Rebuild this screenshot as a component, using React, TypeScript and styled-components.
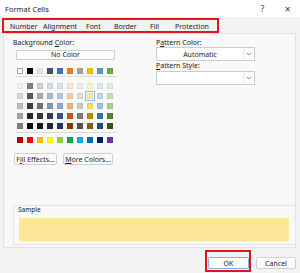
import React from "react";
import styled, { createGlobalStyle } from "styled-components";

const Global = createGlobalStyle`
  html, body { margin: 0; padding: 0; }
  body {
    width: 300px; height: 273px; overflow: hidden; background: #f3f3f3;
    font-family: "Noto Sans", "Open Sans", sans-serif;
  }
`;

const Dialog = styled.div`
  width: 300px; height: 273px; display: flex; flex-direction: column;
  background: #f3f3f3; color: #1b1b1b; font-size: 7px; box-sizing: border-box;
`;

const TitleBar = styled.div`
  height: 17px; background: #fff; display: flex; align-items: center;
  padding-left: 5px; flex: none;
`;
const Title = styled.span`flex: 1; font-size: 7.5px;`;
const TitleBtn = styled.span`
  width: 25px; text-align: center; font-size: ${(p: { $size: number }) => p.$size}px; color: #333;
`;

const TabStrip = styled.div`
  margin: 1px 0 0 2px; width: 217px; height: 15px; box-sizing: border-box;
  border: 2px solid #e3141f; display: flex; align-items: center; padding: 3px 0 0 6px;
  flex: none;
`;
const Tab = styled.span<{ $w: number }>`
  width: ${(p) => p.$w}px; flex: none; white-space: nowrap; font-size: 7px; line-height: 8px;
`;

const Panel = styled.div`
  margin-left: 3px; width: 293px; height: 215px; box-sizing: border-box;
  border: 1px solid #e2e2e2; background: #f9f9f9; flex: none;
  display: flex; flex-direction: column; padding: 4px 0 0 6px;
`;

const Columns = styled.div`display: flex; height: 166px; flex: none;`;
const LeftCol = styled.div`width: 143px; padding-left: 3px; display: flex; flex-direction: column;`;
const RightCol = styled.div`width: 100px; display: flex; flex-direction: column;`;

const Label = styled.div`line-height: 9px; height: 9px; white-space: nowrap;`;

const NoColorBtn = styled.div`
  margin: 3px 0 0 3px; width: 99px; height: 10px; box-sizing: border-box;
  background: #fdfdfd; border: 1px solid #cfcfcf; border-radius: 1px;
  display: flex; align-items: center; justify-content: center; line-height: 8px;
`;

const SwatchGrid = styled.div<{ $mt: number }>`
  margin: ${(p) => p.$mt}px 0 0 4px; display: grid;
  grid-template-columns: repeat(10, 6px); column-gap: 4px; row-gap: 4px;
`;
const Swatch = styled.div<{ $c: string; $sel?: boolean }>`
  width: 6px; height: 6px; box-sizing: border-box; background: ${(p) => p.$c};
  border: 1px solid ${(p) => (p.$c.toLowerCase() === "#ffffff" ? "#a0a0a0" : "rgba(0,0,0,0.06)")};
  outline: ${(p) => (p.$sel ? "1px solid #8cc0ec" : "none")};
  outline-offset: 1px;
`;
const Separator = styled.div<{ $mt: number }>`
  margin: ${(p) => p.$mt}px 0 0 3px; width: 102px; height: 1px; background: #dcdcdc;
`;

const BtnRow = styled.div`display: flex; gap: 6px; margin: 10px 0 0 1px;`;
const Button = styled.div<{ $w: number; $default?: boolean }>`
  width: ${(p) => p.$w}px; height: 12px; box-sizing: border-box;
  background: #fdfdfd; border: 1px solid ${(p) => (p.$default ? "#7fb2e2" : "#d0d0d0")};
  border-radius: 2px; display: flex; align-items: center; justify-content: center;
  white-space: nowrap; line-height: 9px;
`;

const Select = styled.div`
  margin-top: ${(p: { $mt: number }) => p.$mt}px; width: 99px; height: 14px; box-sizing: border-box;
  background: #fff; border: 1px solid #cdcdcd; display: flex; align-items: stretch;
`;
const SelectText = styled.div`flex: 1; display: flex; align-items: center; justify-content: center;`;
const SelectArrow = styled.div`
  width: 10px; border-left: 1px solid #e6e6e6; display: flex; align-items: center; justify-content: center;
`;

const Group = styled.div`
  margin: 1px 0 0 3px; width: 283px; height: 40px; box-sizing: border-box; flex: none;
  border: 1px solid #e4e4e4; display: flex; flex-direction: column; padding: 0 5px 2px 4px;
`;
const GroupLabel = styled.div`line-height: 7px; height: 7px; font-size: 6.5px; margin-top: 0px;`;
const SampleFill = styled.div`
  margin-top: 4px; flex: 1; background: #ffe699; border: 1px solid #fbfbfb;
`;

const Footer = styled.div`
  flex: 1; display: flex; justify-content: flex-end; align-items: flex-start;
  padding: 2px 4px 0 0; gap: 5px;
`;
const Highlight = styled.div`
  border: 2px solid #e3141f; padding: 5px 0 2px 1px; height: 22px; box-sizing: border-box;
`;
const FooterBtnWrap = styled.div`padding-top: 7px;`;

const U = styled.span`text-decoration: underline; text-underline-offset: 1px;`;

const themeTop = ["#FFFFFF", "#000000", "#E7E6E6", "#44546A", "#4472C4", "#ED7D31", "#A5A5A5", "#FFC000", "#5B9BD5", "#70AD47"];
const themeCols = [
  ["#F2F2F2", "#D9D9D9", "#BFBFBF", "#A6A6A6", "#808080"],
  ["#808080", "#595959", "#404040", "#262626", "#0D0D0D"],
  ["#D0CECE", "#AEAAAA", "#757171", "#3A3838", "#161616"],
  ["#D6DCE4", "#ACB9CA", "#8497B0", "#333F4F", "#222B35"],
  ["#D9E1F2", "#B4C6E7", "#8EA9DB", "#305496", "#203764"],
  ["#FCE4D6", "#F8CBAD", "#F4B084", "#C65911", "#833C0C"],
  ["#EDEDED", "#DBDBDB", "#C9C9C9", "#7B7B7B", "#525252"],
  ["#FFF2CC", "#FFE699", "#FFD966", "#BF8F00", "#806000"],
  ["#DDEBF7", "#BDD7EE", "#9BC2E6", "#2F75B5", "#1F4E78"],
  ["#E2EFDA", "#C6E0B4", "#A9D08E", "#548235", "#375623"],
];
const standard = ["#C00000", "#FF0000", "#FFC000", "#FFFF00", "#92D050", "#00B050", "#00B0F0", "#0070C0", "#002060", "#7030A0"];

const tabs = [
  { label: "Number", w: 33 },
  { label: "Alignment", w: 43 },
  { label: "Font", w: 28 },
  { label: "Border", w: 36 },
  { label: "Fill", w: 25 },
  { label: "Protection", w: 34 },
];

const Chevron = () => (
  <svg width="6" height="4" viewBox="0 0 6 4">
    <path d="M0.8 0.8 L3 3 L5.2 0.8" fill="none" stroke="#6a6a6a" strokeWidth="0.8" />
  </svg>
);

export default function App() {
  const grid: { c: string; sel: boolean }[] = [];
  for (let r = 0; r < 5; r++) for (let c = 0; c < 10; c++) grid.push({ c: themeCols[c][r], sel: r === 1 && c === 7 });
  return (
    <>
      <Global />
      <Dialog>
        <TitleBar>
          <Title>Format Cells</Title>
          <TitleBtn $size={8}>?</TitleBtn>
          <TitleBtn $size={10}>×</TitleBtn>
        </TitleBar>
        <TabStrip>
          {tabs.map((t) => (
            <Tab key={t.label} $w={t.w}>{t.label}</Tab>
          ))}
        </TabStrip>
        <Panel>
          <Columns>
            <LeftCol>
              <Label>Background <U>C</U>olor:</Label>
              <NoColorBtn>No Color</NoColorBtn>
              <SwatchGrid $mt={8}>
                {themeTop.map((c, i) => <Swatch key={i} $c={c} />)}
              </SwatchGrid>
              <Separator $mt={2} />
              <SwatchGrid $mt={6}>
                {grid.map((g, i) => <Swatch key={i} $c={g.c} $sel={g.sel} />)}
              </SwatchGrid>
              <Separator $mt={3} />
              <SwatchGrid $mt={4}>
                {standard.map((c, i) => <Swatch key={i} $c={c} />)}
              </SwatchGrid>
              <BtnRow>
                <Button $w={43}>F<U>i</U>ll Effects...</Button>
                <Button $w={50}><U>M</U>ore Colors...</Button>
              </BtnRow>
            </LeftCol>
            <RightCol>
              <Label>P<U>a</U>ttern Color:</Label>
              <Select $mt={0}>
                <SelectText>Automatic</SelectText>
                <SelectArrow><Chevron /></SelectArrow>
              </Select>
              <Label><U>P</U>attern Style:</Label>
              <Select $mt={1}>
                <SelectText />
                <SelectArrow><Chevron /></SelectArrow>
              </Select>
            </RightCol>
          </Columns>
          <Group>
            <GroupLabel>Sample</GroupLabel>
            <SampleFill />
          </Group>
        </Panel>
        <Footer>
          <Highlight>
            <Button $w={41} $default>OK</Button>
          </Highlight>
          <FooterBtnWrap>
            <Button $w={40}>Cancel</Button>
          </FooterBtnWrap>
        </Footer>
      </Dialog>
    </>
  );
}
